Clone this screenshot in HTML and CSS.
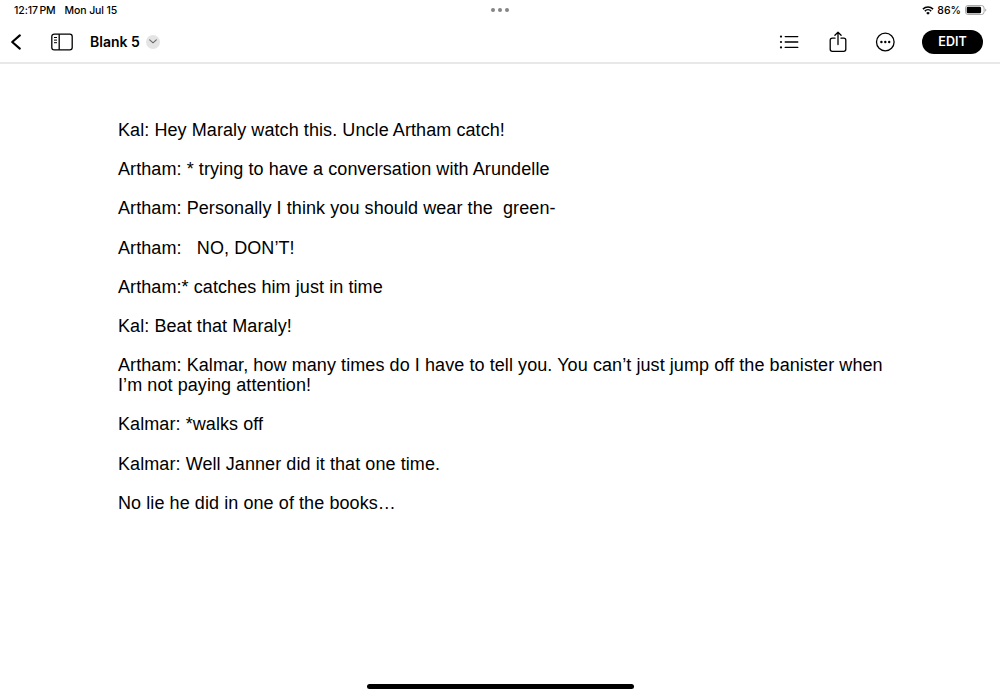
FILE: index.html
```html
<!DOCTYPE html>
<html lang="en">

<head>
    <meta charset="UTF-8">
    <meta name="viewport" content="width=device-width, initial-scale=1.0">
    <title>Blank 5</title>
    <link rel="stylesheet" href="styles.css">
</head>

<body>
    <div class="screen">
        <div class="status">
            <div class="status-left">
                <span class="time">12:17<span class="pm">PM</span></span>
                <span class="date">Mon Jul 15</span>
            </div>
            <div class="dots"><span></span><span></span><span></span></div>
            <div class="status-right">
                <svg class="wifi" width="12" height="9" viewBox="0 0 12 9">
                    <path d="M.9 3.1a7.4 7.4 0 0 1 10.2 0M2.8 5.1a4.6 4.6 0 0 1 6.4 0" fill="none" stroke="#000" stroke-width="1.5"/>
                    <path d="M6 8.8 4.2 6.9a2.6 2.6 0 0 1 3.6 0z"/>
                </svg>
                <span class="percent">86%</span>
                <svg class="battery" width="22" height="10" viewBox="0 0 22 10">
                    <rect x=".5" y=".5" width="18.6" height="9" rx="2.6" fill="none" stroke="#a8a8a8"/>
                    <rect x="1.7" y="1.7" width="14.4" height="6.6" rx="1.4"/>
                    <path d="M20.3 3.5v3q1-.5 1-1.5t-1-1.5z" fill="#999"/>
                </svg>
            </div>
        </div>

        <header class="toolbar">
            <svg class="back" width="12" height="18" viewBox="0 0 12 18">
                <path d="M10.8 2.4 3.2 9l7.6 6.6" fill="none" stroke="#000" stroke-width="2.1" stroke-linecap="round" stroke-linejoin="round"/>
            </svg>
            <svg class="sidebar" width="22" height="18" viewBox="0 0 22 18">
                <g fill="none" stroke="#000" stroke-width="1.3">
                    <rect x=".8" y="1.1" width="20.4" height="15.8" rx="2.4"/>
                    <path d="M8.2 1.2v15.6"/>
                    <path d="M3 4.5h3M3 7.1h3M3 9.7h3" stroke-width="1"/>
                </g>
            </svg>
            <h1>Blank 5</h1>
            <button class="arrow" aria-label="Document menu">
                <svg width="8" height="5" viewBox="0 0 8 5"><path d="m.7.8 3.3 3 3.3-3" fill="none" stroke="#666" stroke-width="1.1" stroke-linecap="round"/></svg>
            </button>

            <div class="actions">
                <svg class="list" width="20" height="14" viewBox="0 0 20 14">
                    <path d="M6.2 1.6h12.6M6.2 7h12.6M6.2 12.4h12.6" stroke="#000" stroke-width="1.3" stroke-linecap="round"/>
                    <circle cx="2" cy="1.6" r="1.1"/><circle cx="2" cy="7" r="1.1"/><circle cx="2" cy="12.4" r="1.1"/>
                </svg>
                <svg class="share" width="18" height="22" viewBox="0 0 18 22">
                    <path d="M6 7.2H3.3Q1.2 7.2 1.2 9.3v9q0 2.1 2.1 2.1h11.4q2.1 0 2.1-2.1v-9q0-2.1-2.1-2.1H12M9 13.5V1.2M5.9 4.2 9 1.2l3.1 3" fill="none" stroke="#000" stroke-width="1.3" stroke-linecap="round" stroke-linejoin="round"/>
                </svg>
                <svg class="more" width="20" height="20" viewBox="0 0 20 20">
                    <circle cx="10.3" cy="10" r="8.8" fill="none" stroke="#000" stroke-width="1.3"/>
                    <circle cx="6.4" cy="10" r="1.2"/><circle cx="10.3" cy="10" r="1.2"/><circle cx="14.2" cy="10" r="1.2"/>
                </svg>
                <button class="edit">EDIT</button>
            </div>
        </header>

        <main class="note">
            <p>Kal: Hey Maraly watch this. Uncle Artham catch!</p>
            <p>Artham: * trying to have a conversation with Arundelle</p>
            <p>Artham: Personally I think you should wear the  green-</p>
            <p>Artham:   NO, DON’T!</p>
            <p>Artham:* catches him just in time</p>
            <p>Kal: Beat that Maraly!</p>
            <p>Artham: Kalmar, how many times do I have to tell you. You can’t just jump off the banister when I’m not paying attention!</p>
            <p>Kalmar: *walks off</p>
            <p>Kalmar: Well Janner did it that one time.</p>
            <p>No lie he did in one of the books…</p>
        </main>

        <div class="home-bar"></div>
    </div>
</body>

</html>
```

FILE: styles.css
```css
* {
    box-sizing: border-box;
}

body {
    margin: 0;
    background-color: #fff;
    color: #000;
    font-family: Inter, sans-serif;
}

.screen {
    display: flex;
    flex-direction: column;
    height: 694px;
    width: 1000px;
    overflow: hidden;
}

svg {
    display: block;
    flex-shrink: 0;
}

/* Status bar */
.status {
    display: grid;
    grid-template-columns: 1fr auto 1fr;
    align-items: center;
    height: 20px;
    padding: 0 13px;
    font-size: 10.5px;
    font-weight: 500;
}

.status-left,
.status-right {
    display: flex;
    align-items: center;
}

.status-left {
    gap: 9px;
    padding-left: 1px;
}

.time {
    letter-spacing: -0.1px;
}

.pm {
    margin-left: 1.5px;
}

.date {
    letter-spacing: -0.1px;
}

.dots {
    display: flex;
    gap: 3px;
}

.dots span {
    width: 4px;
    height: 4px;
    border-radius: 50%;
    background-color: #858585;
}

.status-right {
    justify-content: flex-end;
}

.percent {
    margin: 0 4px 0 3px;
}

/* Toolbar */
.toolbar {
    display: flex;
    align-items: center;
    height: 44px;
    padding: 1px 17px 0 9px;
    border-bottom: 2px solid #e8e8e8;
}

.sidebar {
    margin-left: 30px;
}

h1 {
    margin: -1px 0 0 17px;
    font-size: 14px;
    font-weight: 600;
}

.arrow {
    display: flex;
    align-items: center;
    justify-content: center;
    width: 14px;
    height: 14px;
    margin-left: 6px;
    padding: 0;
    border: none;
    border-radius: 50%;
    background-color: #e4e4e4;
}

.actions {
    display: flex;
    align-items: center;
    margin-left: auto;
}

.share {
    margin-left: 30px;
}

.more {
    margin: 0 27px 0 28px;
}

.edit {
    width: 61px;
    height: 24px;
    padding: 0;
    border: none;
    border-radius: 12px;
    background-color: #000;
    color: #fff;
    font-family: Inter, sans-serif;
    font-size: 12.5px;
    font-weight: 600;
}

/* Document text */
.note {
    flex: 1;
    padding: 57px 110px 0 118px;
    font-family: "Liberation Sans", Arial, sans-serif;
    font-size: 18px;
    line-height: 19.62px;
    letter-spacing: 0.08px;
    white-space: pre-wrap;
    display: flex;
    flex-direction: column;
    gap: 19.62px;
}

.note p {
    margin: 0;
}

.home-bar {
    width: 267px;
    height: 5px;
    margin: 0 auto 5px;
    border-radius: 3px;
    background-color: #000;
}
```
